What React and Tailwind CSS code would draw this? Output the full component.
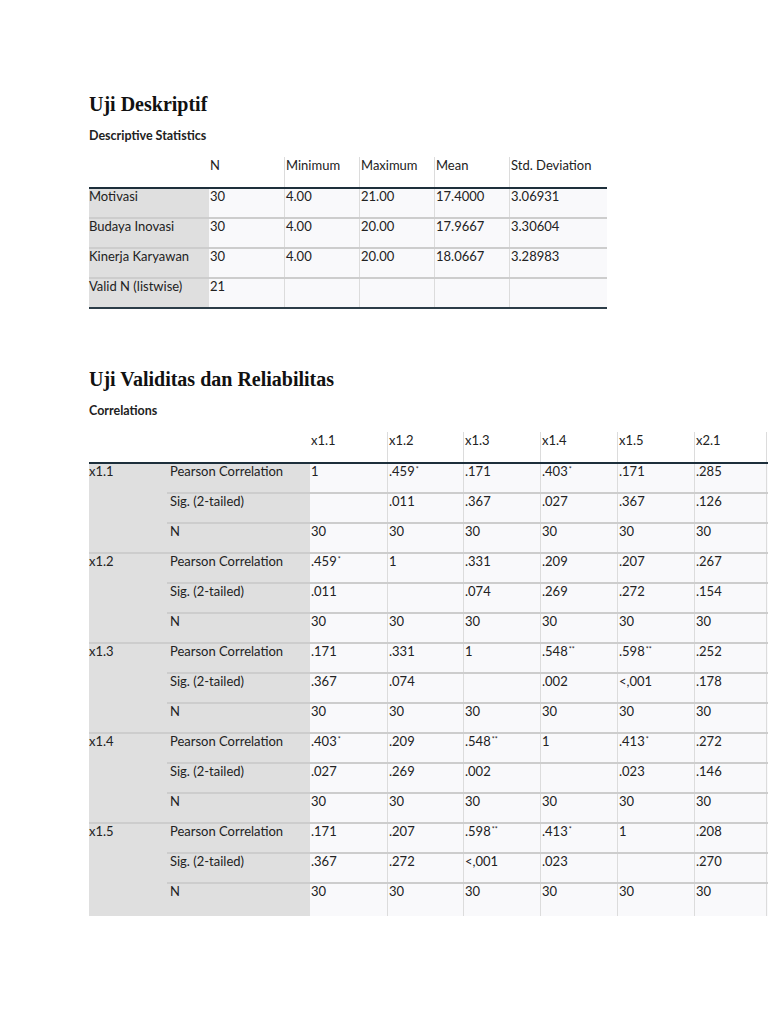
import React from 'react';

const descCols = [120, 75, 75, 75, 75, 98];
const descHead = ['', 'N', 'Minimum', 'Maximum', 'Mean', 'Std. Deviation'];
const descRows = [
  ['Motivasi', '30', '4.00', '21.00', '17.4000', '3.06931'],
  ['Budaya Inovasi', '30', '4.00', '20.00', '17.9667', '3.30604'],
  ['Kinerja Karyawan', '30', '4.00', '20.00', '18.0667', '3.28983'],
  ['Valid N (listwise)', '21', '', '', '', ''],
];

const corrCols = [77, 76, 77, 77, 77, 72, 80];
const corrHead = ['x1.1', 'x1.2', 'x1.3', 'x1.4', 'x1.5', 'x2.1', ''];

// values: [text, stars]
const corrGroups = [
  {
    name: 'x1.1',
    pc: [['1'], ['.459', '*'], ['.171'], ['.403', '*'], ['.171'], ['.285'], ['']],
    sig: [[''], ['.011'], ['.367'], ['.027'], ['.367'], ['.126'], ['']],
  },
  {
    name: 'x1.2',
    pc: [['.459', '*'], ['1'], ['.331'], ['.209'], ['.207'], ['.267'], ['']],
    sig: [['.011'], [''], ['.074'], ['.269'], ['.272'], ['.154'], ['']],
  },
  {
    name: 'x1.3',
    pc: [['.171'], ['.331'], ['1'], ['.548', '**'], ['.598', '**'], ['.252'], ['']],
    sig: [['.367'], ['.074'], [''], ['.002'], ['<,001'], ['.178'], ['']],
  },
  {
    name: 'x1.4',
    pc: [['.403', '*'], ['.209'], ['.548', '**'], ['1'], ['.413', '*'], ['.272'], ['']],
    sig: [['.027'], ['.269'], ['.002'], [''], ['.023'], ['.146'], ['']],
  },
  {
    name: 'x1.5',
    pc: [['.171'], ['.207'], ['.598', '**'], ['.413', '*'], ['1'], ['.208'], ['']],
    sig: [['.367'], ['.272'], ['<,001'], ['.023'], [''], ['.270'], ['']],
  },
];

function Val({ v }) {
  return (
    <>
      {v[0]}
      {v[1] && <sup className="relative -top-[4px] ml-[1px] text-[7px] leading-none">{v[1]}</sup>}
    </>
  );
}

function DescriptiveTable() {
  return (
    <div className="w-[518px] leading-[14px]">
      <div className="flex h-[30px]">
        {descHead.map((h, i) => (
          <div
            key={i}
            style={{ width: descCols[i] }}
            className={`shrink-0 pt-[1px] pl-[1px] ${i > 1 ? 'border-l border-[#dcdcdc]' : ''}`}
          >
            {h}
          </div>
        ))}
      </div>
      <div className="border-t-2 border-[#1d2f3b]">
        {descRows.map((row, r) => (
          <div
            key={r}
            className={`flex h-[30px] border-b-2 ${r === descRows.length - 1 ? 'border-[#2c3d48]' : 'border-[#cdcdcd]'}`}
          >
            {row.map((c, i) => (
              <div
                key={i}
                style={{ width: descCols[i] }}
                className={`shrink-0 ${i === 0 ? 'bg-[#dfdfdf]' : 'bg-[#f9f9fb] pl-[1px]'} ${i > 1 ? 'border-l border-[#dcdcdc]' : ''}`}
              >
                {c}
              </div>
            ))}
          </div>
        ))}
      </div>
    </div>
  );
}

function DataCells({ values }) {
  return values.map((v, i) => (
    <div
      key={i}
      style={{ width: corrCols[i] }}
      className={`shrink-0 bg-[#f9f9fb] pl-[1px] ${i > 0 ? 'border-l border-[#dcdcdc]' : ''}`}
    >
      <Val v={v} />
    </div>
  ));
}

function CorrelationTable() {
  return (
    <div className="w-max leading-[14px]">
      <div className="flex h-[30px]">
        <div className="w-[221px] shrink-0" />
        {corrHead.map((h, i) => (
          <div
            key={i}
            style={{ width: corrCols[i] }}
            className={`shrink-0 pt-[1px] pl-[1px] ${i > 0 ? 'border-l border-[#dcdcdc]' : ''}`}
          >
            {h}
          </div>
        ))}
      </div>
      <div className="border-t-2 border-[#1d2f3b]">
        {corrGroups.map((g, gi) => {
          const last = gi === corrGroups.length - 1;
          const rows = [
            ['Pearson Correlation', g.pc],
            ['Sig. (2-tailed)', g.sig],
            ['N', corrHead.map((h) => [h === '' ? '' : '30'])],
          ];
          return (
            <div key={gi} className={`flex ${last ? '' : 'border-b-2 border-[#cdcdcd]'}`}>
              <div className="w-[78px] shrink-0 bg-[#dfdfdf]">{g.name}</div>
              <div>
                {rows.map(([label, vals], ri) => (
                  <div
                    key={ri}
                    className={`flex ${ri < 2 ? 'h-[30px] border-b-2 border-[#cdcdcd]' : 'h-[28px]'}`}
                  >
                    <div className="w-[143px] shrink-0 bg-[#dfdfdf] pl-[3px]">{label}</div>
                    <DataCells values={vals} />
                  </div>
                ))}
              </div>
            </div>
          );
        })}
        <div className="flex h-[4px]">
          <div className="w-[221px] shrink-0 bg-[#dfdfdf]" />
          <DataCells values={corrHead.map(() => [''])} />
        </div>
      </div>
    </div>
  );
}

export default function App() {
  return (
    <div className="min-h-[1024px] w-[768px] overflow-hidden bg-white pt-[91px] pl-[89px] font-['Lato',sans-serif] text-[13px] leading-[16px] text-[#222]">
      <h1 className="font-['Liberation_Serif',serif] text-[20px] font-bold leading-[26px] text-[#111]">
        Uji Deskriptif
      </h1>
      <div className="mt-[11px] text-[12.5px] font-bold leading-[16px]">Descriptive Statistics</div>
      <div className="mt-[13px]">
        <DescriptiveTable />
      </div>

      <h1 className="mt-[57px] font-['Liberation_Serif',serif] text-[20px] font-bold leading-[26px] text-[#111]">
        Uji Validitas dan Reliabilitas
      </h1>
      <div className="mt-[11px] text-[12.5px] font-bold leading-[16px]">Correlations</div>
      <div className="mt-[13px]">
        <CorrelationTable />
      </div>
    </div>
  );
}
